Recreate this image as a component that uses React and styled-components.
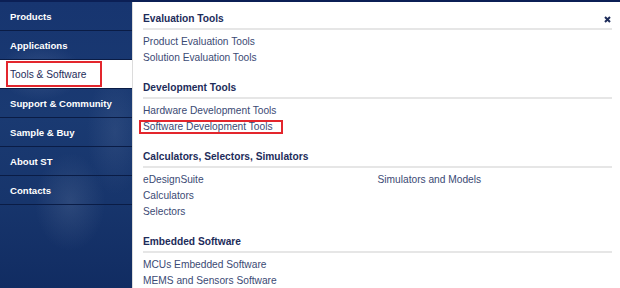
import React from "react";
import styled, { createGlobalStyle, css } from "styled-components";

const Global = createGlobalStyle`
  html, body { margin: 0; padding: 0; background: #fff; }
  body { font-family: "Liberation Sans", Arial, sans-serif; }
`;

const Frame = styled.div`
  width: 620px;
  height: 288px;
  display: flex;
  border-top: 2px solid #0b1f55;
  box-sizing: border-box;
  overflow: hidden;
`;

const Sidebar = styled.nav`
  width: 132px;
  flex: none;
  display: flex;
  flex-direction: column;
  background:
    radial-gradient(ellipse 60px 40px at 40px 70px, rgba(120,140,180,0.25), transparent 70%),
    radial-gradient(ellipse 50px 70px at 70px 200px, rgba(120,140,175,0.22), transparent 70%),
    radial-gradient(ellipse 40px 90px at 115px 130px, rgba(110,130,170,0.18), transparent 70%),
    linear-gradient(180deg, #173570 0%, #1a3a72 40%, #17356c 70%, #112c62 100%);
`;

const NavItem = styled.div`
  height: 28px;
  display: flex;
  align-items: center;
  padding-left: 10px;
  border-bottom: 1px solid #0a1c45;
  color: #fff;
  font-size: 9.6px;
  font-weight: bold;
  ${(p) =>
    p.$active &&
    css`
      background: #fff;
      color: #1d2c5a;
      font-weight: normal;
      font-size: 10.2px;
      border-bottom-color: #0a1c45;
      margin-right: -1px;
    `}
`;

const Marked = styled.span`
  position: relative;
  &::after {
    content: "";
    position: absolute;
    left: ${(p) => p.$l}px;
    right: ${(p) => p.$r}px;
    top: ${(p) => p.$t}px;
    bottom: ${(p) => p.$b}px;
    border: 2px solid #e3262d;
    pointer-events: none;
  }
`;

const Panel = styled.section`
  flex: 1;
  border-left: 1px solid #dcdcdc;
  padding: 9px 8px 0 10px;
  background: #fff;
`;

const Section = styled.div`
  margin-bottom: 14px;
`;

const Heading = styled.div`
  display: flex;
  justify-content: space-between;
  align-items: center;
  line-height: 16px;
  padding-bottom: 1px;
  border-bottom: 2px solid #e6e6e6;
  margin-bottom: 4px;
  font-size: 10.2px;
  font-weight: bold;
  color: #1d2c5a;
`;

const Close = styled.svg`
  width: 7px;
  height: 7px;
  margin-right: 1px;
`;

const Links = styled.div`
  display: grid;
  grid-template-columns: ${(p) => (p.$cols === 2 ? "1fr 1fr" : "1fr")};
  grid-auto-flow: column;
  grid-template-rows: ${(p) => `repeat(${p.$rows}, 16px)`};
`;

const Link = styled.div`
  font-size: 10.2px;
  line-height: 16px;
  color: #3b4a74;
  white-space: nowrap;
`;

const nav = [
  "Products",
  "Applications",
  "Tools & Software",
  "Support & Community",
  "Sample & Buy",
  "About ST",
  "Contacts",
];

export default function App() {
  return (
    <>
      <Global />
      <Frame>
        <Sidebar>
          {nav.map((n) =>
            n === "Tools & Software" ? (
              <NavItem key={n} $active>
                <Marked $l={-4} $r={-16} $t={-8} $b={-7}>
                  {n}
                </Marked>
              </NavItem>
            ) : (
              <NavItem key={n}>{n}</NavItem>
            )
          )}
        </Sidebar>
        <Panel>
          <Section>
            <Heading>
              Evaluation Tools
              <Close viewBox="0 0 7 7">
                <path d="M1 1L6 6M6 1L1 6" stroke="#1d2c5a" strokeWidth="2" />
              </Close>
            </Heading>
            <Links $rows={2}>
              <Link>Product Evaluation Tools</Link>
              <Link>Solution Evaluation Tools</Link>
            </Links>
          </Section>
          <Section>
            <Heading>Development Tools</Heading>
            <Links $rows={2}>
              <Link>Hardware Development Tools</Link>
              <Link>
                <Marked $l={-4} $r={-10} $t={-1} $b={-2}>
                  Software Development Tools
                </Marked>
              </Link>
            </Links>
          </Section>
          <Section>
            <Heading>Calculators, Selectors, Simulators</Heading>
            <Links $rows={3} $cols={2}>
              <Link>eDesignSuite</Link>
              <Link>Calculators</Link>
              <Link>Selectors</Link>
              <Link>Simulators and Models</Link>
            </Links>
          </Section>
          <Section>
            <Heading>Embedded Software</Heading>
            <Links $rows={2}>
              <Link>MCUs Embedded Software</Link>
              <Link>MEMS and Sensors Software</Link>
            </Links>
          </Section>
        </Panel>
      </Frame>
    </>
  );
}
